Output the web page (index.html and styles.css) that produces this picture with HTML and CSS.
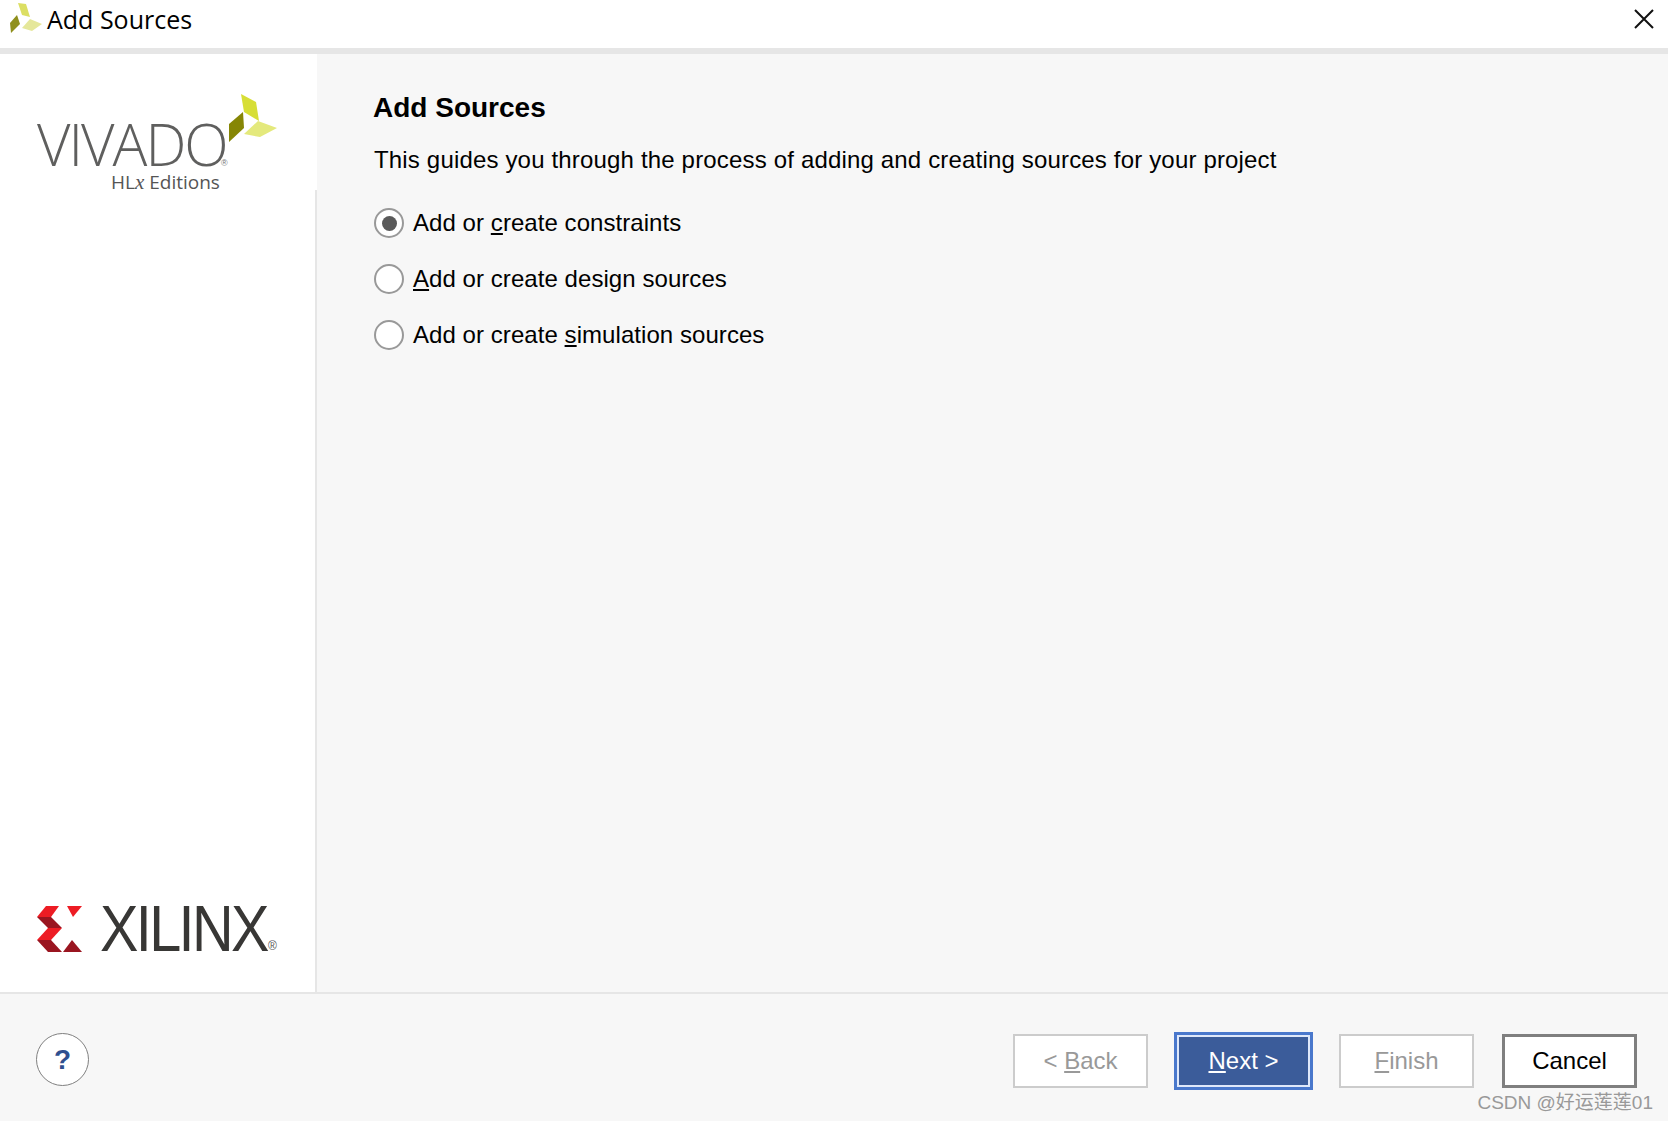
FILE: index.html
```html
<!DOCTYPE html>
<html lang="en">
<head>
  <meta charset="UTF-8" />
  <title>Add Sources</title>
  <link rel="stylesheet" href="styles.css">
</head>
<body>
  <header class="titlebar">
    <svg class="app-icon" width="33" height="31" viewBox="0 0 33 31">
      <polygon points="8,0 16,1 20,14 12,12" fill="#dcdf63"/>
      <polygon points="0,20 7,12 10,21 1,30" fill="#8f8f1c"/>
      <polygon points="12,25 20,16 32,21 22,28" fill="#e5e79a"/>
    </svg>
    <span class="titlebar-text">Add Sources</span>
    <svg class="close-icon" width="20" height="20" viewBox="0 0 20 20">
      <path d="M1 1 L19 19 M19 1 L1 19" stroke="#111" stroke-width="2" fill="none"/>
    </svg>
  </header>

  <div class="main">
    <aside class="sidebar">
      <div class="vivado">
        <span class="vivado-name">VIVADO</span>
        <span class="vivado-reg">®</span>
        <svg class="vivado-mark" width="50" height="50" viewBox="0 0 50 50">
          <polygon points="12,0 27,8 30,27 15,18" fill="#d7de36"/>
          <polygon points="0,30 14,18 15,34 0,48" fill="#868605"/>
          <polygon points="15,40 29,27 48,34 31,43" fill="#e4e97c"/>
        </svg>
        <span class="vivado-sub">HL<i>x</i> Editions</span>
      </div>
      <div class="xilinx">
        <svg class="xilinx-mark" width="46" height="46" viewBox="0 0 46 46">
          <polygon points="0,11 9,0 22,0 14,11" fill="#ed1c24"/>
          <polygon points="0,11 14,11 25,22 11,22" fill="#9a1520"/>
          <polygon points="0,34 11,22 25,22 14,34" fill="#ed1c24"/>
          <polygon points="0,34 14,34 25,46 11,46" fill="#9a1520"/>
          <polygon points="30,0 45,0 36,11" fill="#ed1c24"/>
          <polygon points="26,46 35,34 45,46" fill="#9a1520"/>
        </svg>
        <span class="xilinx-name">XILINX</span>
        <span class="xilinx-reg">®</span>
      </div>
    </aside>

    <section class="content">
      <h1 class="page-title">Add Sources</h1>
      <p class="page-desc">This guides you through the process of adding and creating sources for your project</p>
      <div class="options">
        <label class="option"><span class="radio radio-on"></span><span>Add or <u>c</u>reate constraints</span></label>
        <label class="option"><span class="radio"></span><span><u>A</u>dd or create design sources</span></label>
        <label class="option"><span class="radio"></span><span>Add or create <u>s</u>imulation sources</span></label>
      </div>
    </section>
  </div>

  <footer class="footer">
    <button class="help-btn">?</button>
    <div class="actions">
      <button class="btn btn-disabled">&lt; <u>B</u>ack</button>
      <button class="btn btn-primary"><u>N</u>ext &gt;</button>
      <button class="btn btn-disabled"><u>F</u>inish</button>
      <button class="btn btn-cancel">Cancel</button>
    </div>
    <span class="watermark">CSDN @好运莲莲01</span>
  </footer>
</body>
</html>
```

FILE: styles.css
```css
html, body {
  height: 100%;
}
body {
  margin: 0;
  display: flex;
  flex-direction: column;
  height: 1121px;
  overflow: hidden;
  background: #f7f7f7;
  color: #000;
  font-family: "Liberation Sans", Arial, sans-serif;
  font-size: 24px;
}
.titlebar {
  height: 48px;
  flex: none;
  display: flex;
  align-items: flex-start;
  background: #fff;
  border-bottom: 6px solid #e6e6e6;
  padding: 0 14px 0 10px;
}
.app-icon {
  margin-top: 3px;
}
.titlebar-text {
  margin-left: 4px;
  font-family: "Open Sans", sans-serif;
  font-size: 25px;
  line-height: 38px;
}
.close-icon {
  margin: 9px 0 0 auto;
}
.main {
  flex: 1;
  display: flex;
  min-height: 0;
}
.sidebar {
  width: 317px;
  flex: none;
  display: flex;
  flex-direction: column;
  justify-content: space-between;
  background: #fff;
  position: relative;
}
.sidebar::after {
  content: "";
  position: absolute;
  top: 136px;
  bottom: 0;
  right: 0;
  width: 2px;
  background: #e6e6e6;
}
.vivado {
  position: relative;
  height: 136px;
}
.vivado-name {
  position: absolute;
  left: 37px;
  top: 68px;
  font-family: "Open Sans", sans-serif;
  font-weight: 300;
  font-size: 58px;
  line-height: 44px;
  letter-spacing: -2px;
  color: #5f5f5e;
}
.vivado-reg {
  position: absolute;
  left: 221px;
  top: 104px;
  font-size: 9px;
  color: #777;
}
.vivado-mark {
  position: absolute;
  left: 229px;
  top: 40px;
}
.vivado-sub {
  position: absolute;
  left: 111px;
  top: 116px;
  font-family: "Open Sans", sans-serif;
  font-size: 19px;
  line-height: 24px;
  color: #555;
}
.vivado-sub i {
  font-family: "Liberation Serif", serif;
  font-size: 21px;
}
.xilinx {
  display: flex;
  align-items: flex-start;
  padding: 0 0 40px 37px;
  height: 46px;
}
.xilinx-name {
  margin-left: 17px;
  font-size: 65px;
  line-height: 46px;
  letter-spacing: -3px;
  color: #383735;
  transform: scaleX(0.887);
  transform-origin: left center;
}
.xilinx-reg {
  margin: 34px 0 0 -20px;
  font-size: 12px;
  line-height: 12px;
  color: #555;
}
.content {
  flex: 1;
  padding: 38px 0 0 56px;
}
.page-title {
  margin: 0;
  font-size: 28px;
  line-height: 32px;
  font-weight: bold;
}
.page-desc {
  margin: 20px 0 0 1px;
  line-height: 32px;
  letter-spacing: 0.17px;
}
.options {
  margin: 31px 0 0 1px;
  display: flex;
  flex-direction: column;
  gap: 24px;
}
.option {
  display: flex;
  align-items: center;
  gap: 9px;
  height: 32px;
  letter-spacing: 0.06px;
}
.radio {
  width: 30px;
  height: 30px;
  box-sizing: border-box;
  border-radius: 50%;
  border: 2px solid #999;
  background: #fff;
  display: flex;
  align-items: center;
  justify-content: center;
}
.radio-on::after {
  content: "";
  width: 15px;
  height: 15px;
  border-radius: 50%;
  background: #5a5a5a;
}
.footer {
  position: relative;
  height: 129px;
  flex: none;
  box-sizing: border-box;
  border-top: 2px solid #e6e6e6;
  display: flex;
  align-items: flex-start;
  justify-content: space-between;
  padding: 38px 31px 0 36px;
}
.help-btn {
  width: 53px;
  height: 53px;
  margin-top: 1px;
  border-radius: 50%;
  border: 1.5px solid #808080;
  background: #fff;
  color: #2f4f8f;
  font-family: "Liberation Sans", sans-serif;
  font-size: 28px;
  font-weight: bold;
  padding: 0;
}
.actions {
  display: flex;
  align-items: center;
  gap: 27px;
}
.btn {
  width: 135px;
  height: 54px;
  box-sizing: border-box;
  background: #fff;
  border: 2px solid #ccc;
  font-family: "Liberation Sans", sans-serif;
  font-size: 24px;
  padding: 0;
  color: #000;
}
.btn-disabled {
  color: #999;
}
.btn-primary {
  width: 139px;
  height: 58px;
  margin: 0 -1px;
  background: #3b5c9a;
  color: #fff;
  border: 3px solid #4a78cc;
  outline: 2px solid #dfe8fa;
  outline-offset: -5px;
}
.btn-cancel {
  margin-left: 1px;
  border: 3px solid #7f7f7f;
}
.watermark {
  position: absolute;
  right: 15px;
  bottom: 7px;
  font-size: 19px;
  color: #999;
  font-family: "Liberation Sans", "Noto Sans CJK SC", sans-serif;
}
```
